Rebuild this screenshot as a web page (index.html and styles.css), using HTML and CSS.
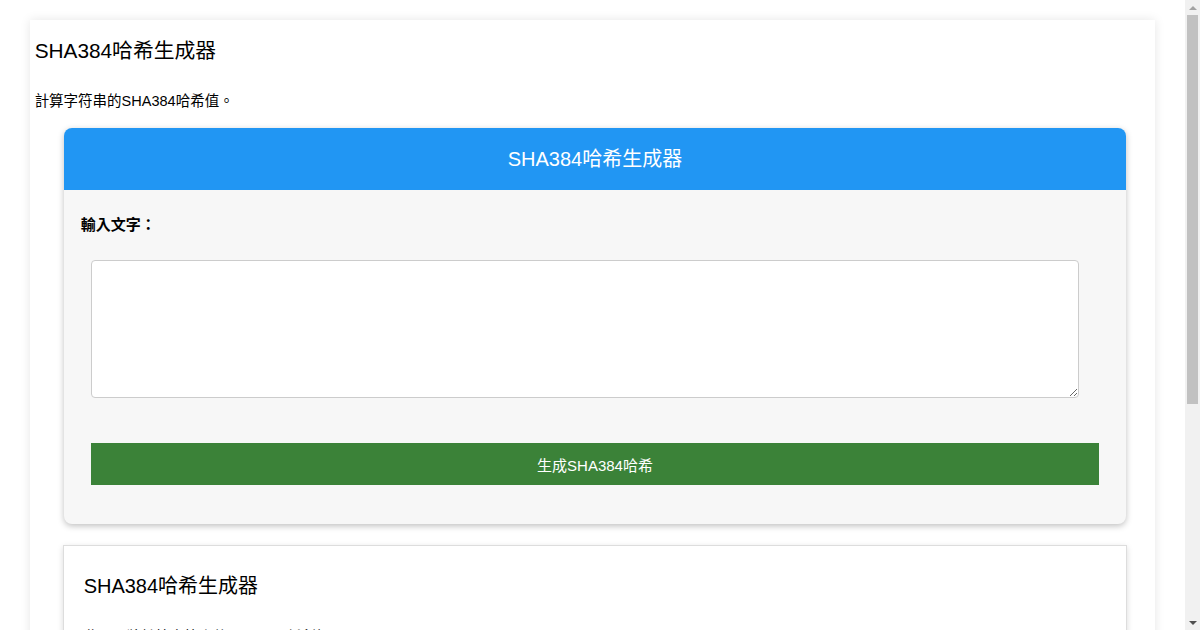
FILE: index.html
```html
<!DOCTYPE html>
<html lang="zh-Hant">
<head>
    <meta charset="UTF-8">
    <meta name="viewport" content="width=device-width, initial-scale=1.0">
    <title>SHA384哈希生成器</title>
    <link rel="stylesheet" href="styles.css">
</head>
<body>
    <div class="container">
        <h1 class="page-title">SHA384哈希生成器</h1>
        <p class="page-desc">計算字符串的SHA384哈希值。</p>

        <div class="tool-card">
            <div class="tool-header">SHA384哈希生成器</div>
            <div class="tool-body">
                <label class="tool-label" for="input-text">輸入文字：</label>
                <textarea id="input-text" class="tool-input"></textarea>
                <button class="tool-button" type="button">生成SHA384哈希</button>
            </div>
        </div>

        <div class="info-card">
            <h2 class="info-title">SHA384哈希生成器</h2>
            <p class="info-text">此工具將計算字符串的SHA384哈希值。</p>
            <p class="info-text">SHA384是SHA-2系列中的一種加密哈希函數，會產生384位元（96個十六進位字元）的哈希值。</p>
            <p class="info-text">在上方輸入文字，然後點擊按鈕即可生成結果。</p>
            <p class="info-text">所有計算均在您的瀏覽器中完成，輸入的內容不會被上傳。</p>
            <p class="info-text">常見用途包括檔案完整性驗證、數位簽章及密碼儲存。</p>
        </div>
    </div>

    <div class="scrollbar">
        <div class="scroll-up"></div>
        <div class="scroll-thumb"></div>
        <div class="scroll-space"></div>
        <div class="scroll-down"></div>
    </div>
</body>
</html>
```

FILE: styles.css
```css
body {
    font-family: "Liberation Sans", Arial, "Noto Sans CJK TC", sans-serif;
    margin: 0 15px 0 0;
    background-color: #fff;
    color: #000;
}
.container {
    width: 95%;
    margin: 20px auto;
    padding: 5px 5px 30px;
    box-sizing: border-box;
    background: #fff;
    box-shadow: 0 0 10px rgba(0, 0, 0, 0.1);
}
.page-title {
    font-size: 20.8px;
    font-weight: normal;
    line-height: 24px;
    margin: 14px 0 0;
}
.page-desc {
    font-size: 14.5px;
    line-height: 20px;
    margin: 28px 0 17px;
}
.tool-card {
    margin: 0 24px 0 29px;
    background: #f7f7f7;
    border-radius: 8px;
    box-shadow: 0 2px 6px rgba(0, 0, 0, 0.25);
    overflow: hidden;
}
.tool-header {
    background: #2196f3;
    color: #fff;
    font-size: 20px;
    line-height: 62px;
    text-align: center;
}
.tool-body {
    padding: 25px 17px 39px;
}
.tool-label {
    display: block;
    font-size: 15px;
    font-weight: bold;
    line-height: 20px;
}
.tool-input {
    display: block;
    width: 988px;
    height: 138px;
    margin: 25px 10px 0;
    box-sizing: border-box;
    border: 1px solid #ccc;
    border-radius: 4px;
    background: #fff;
    padding: 8px;
    font-family: inherit;
    font-size: 14px;
}
.tool-button {
    display: block;
    width: calc(100% - 20px);
    height: 42px;
    margin: 45px 10px 0;
    border: none;
    background: #3b8238;
    color: #fff;
    font-family: inherit;
    font-size: 15px;
    cursor: pointer;
}
.info-card {
    margin: 21px 23px 0 28px;
    padding: 20px;
    background: #fff;
    border: 1px solid #ddd;
    box-shadow: 0 2px 6px rgba(0, 0, 0, 0.15);
}
.info-title {
    font-size: 20px;
    font-weight: normal;
    line-height: 24px;
    margin: 8px 0 0;
}
.info-text {
    font-size: 14.4px;
    line-height: 20px;
    margin: 29px 0 0;
}

/* window scrollbar */
.scrollbar {
    position: fixed;
    top: 0;
    right: 0;
    width: 15px;
    height: 100%;
    background: #f1f1f1;
    display: flex;
    flex-direction: column;
}
.scroll-up,
.scroll-down {
    height: 15px;
    display: flex;
    align-items: center;
    justify-content: center;
}
.scroll-up::after {
    content: "";
    border-left: 4px solid transparent;
    border-right: 4px solid transparent;
    border-bottom: 4px solid #a3a3a3;
}
.scroll-down::after {
    content: "";
    border-left: 4px solid transparent;
    border-right: 4px solid transparent;
    border-top: 4px solid #505050;
}
.scroll-thumb {
    height: 389px;
    margin: 0 2px;
    background: #c1c1c1;
}
.scroll-space {
    flex: 1;
}
```
